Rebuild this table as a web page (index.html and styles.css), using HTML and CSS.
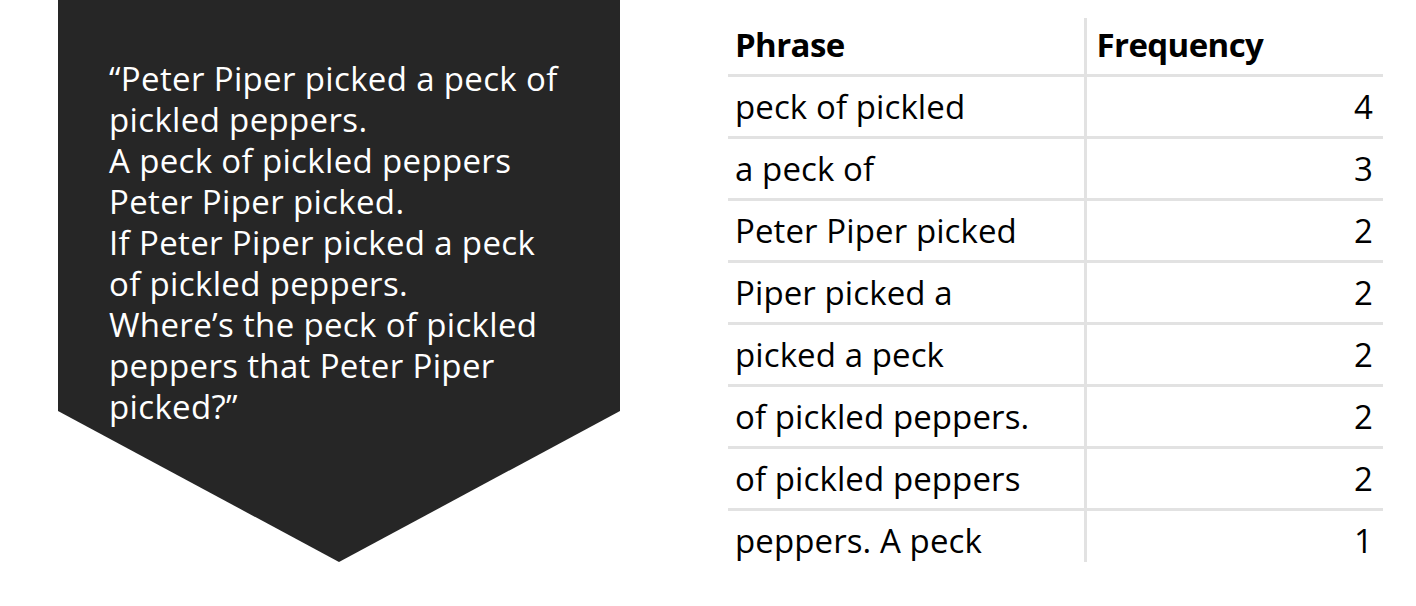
FILE: index.html
```html
<!DOCTYPE html>
<html lang="en">
<head>
<meta charset="utf-8">
<title>Peter Piper n-grams</title>
<link rel="stylesheet" href="styles.css">
</head>
<body>
<main class="slide">
  <section class="quote-shape">
    <p class="quote">“Peter Piper picked a peck of<br>pickled peppers.<br>A peck of pickled peppers<br>Peter Piper picked.<br>If Peter Piper picked a peck<br>of pickled peppers.<br>Where’s the peck of pickled<br>peppers that Peter Piper<br>picked?”</p>
  </section>
  <section class="table-wrap">
    <table class="freq">
      <thead>
        <tr><th class="phrase">Phrase</th><th class="count-h">Frequency</th></tr>
      </thead>
      <tbody>
        <tr><td class="phrase">peck of pickled</td><td class="count">4</td></tr>
        <tr><td class="phrase">a peck of</td><td class="count">3</td></tr>
        <tr><td class="phrase">Peter Piper picked</td><td class="count">2</td></tr>
        <tr><td class="phrase">Piper picked a</td><td class="count">2</td></tr>
        <tr><td class="phrase">picked a peck</td><td class="count">2</td></tr>
        <tr><td class="phrase">of pickled peppers.</td><td class="count">2</td></tr>
        <tr><td class="phrase">of pickled peppers</td><td class="count">2</td></tr>
        <tr><td class="phrase">peppers. A peck</td><td class="count">1</td></tr>
      </tbody>
    </table>
  </section>
</main>
</body>
</html>
```

FILE: styles.css
```css
html, body {
  margin: 0;
  padding: 0;
  background: #ffffff;
}

body {
  width: 1416px;
  height: 606px;
  overflow: hidden;
  font-family: "Open Sans", "Noto Sans", sans-serif;
}

.slide {
  display: flex;
  align-items: flex-start;
  padding-left: 58px;
}

.quote-shape {
  width: 562px;
  height: 562px;
  background: #262626;
  clip-path: polygon(0 0, 100% 0, 100% 411px, 50% 100%, 0 411px);
  box-sizing: border-box;
  padding: 58px 0 0 51px;
}

.quote {
  margin: 0;
  color: #ffffff;
  font-size: 33px;
  line-height: 41px;
  letter-spacing: 0.35px;
  white-space: nowrap;
}

.table-wrap {
  margin-left: 108px;
  padding-top: 18px;
  height: 544px;
  overflow: hidden;
}

.freq {
  width: 655px;
  border-collapse: collapse;
  color: #000000;
  font-size: 33px;
  letter-spacing: 0.1px;
}

.freq th,
.freq td {
  padding: 0 10px 0 7px;
  border-bottom: 3px solid #e2e2e2;
  box-sizing: border-box;
  white-space: nowrap;
}

.freq th.phrase,
.freq td.phrase {
  width: 357px;
  border-right: 3px solid #e2e2e2;
  text-align: left;
}

.freq thead th {
  height: 57px;
  font-weight: 700;
  text-align: left;
  vertical-align: middle;
  padding-bottom: 2px;
  letter-spacing: -0.6px;
}

.freq thead th.count-h {
  padding-left: 10px;
}

.freq tbody td {
  height: 62px;
  vertical-align: middle;
}

.freq td.count {
  text-align: right;
}
```
